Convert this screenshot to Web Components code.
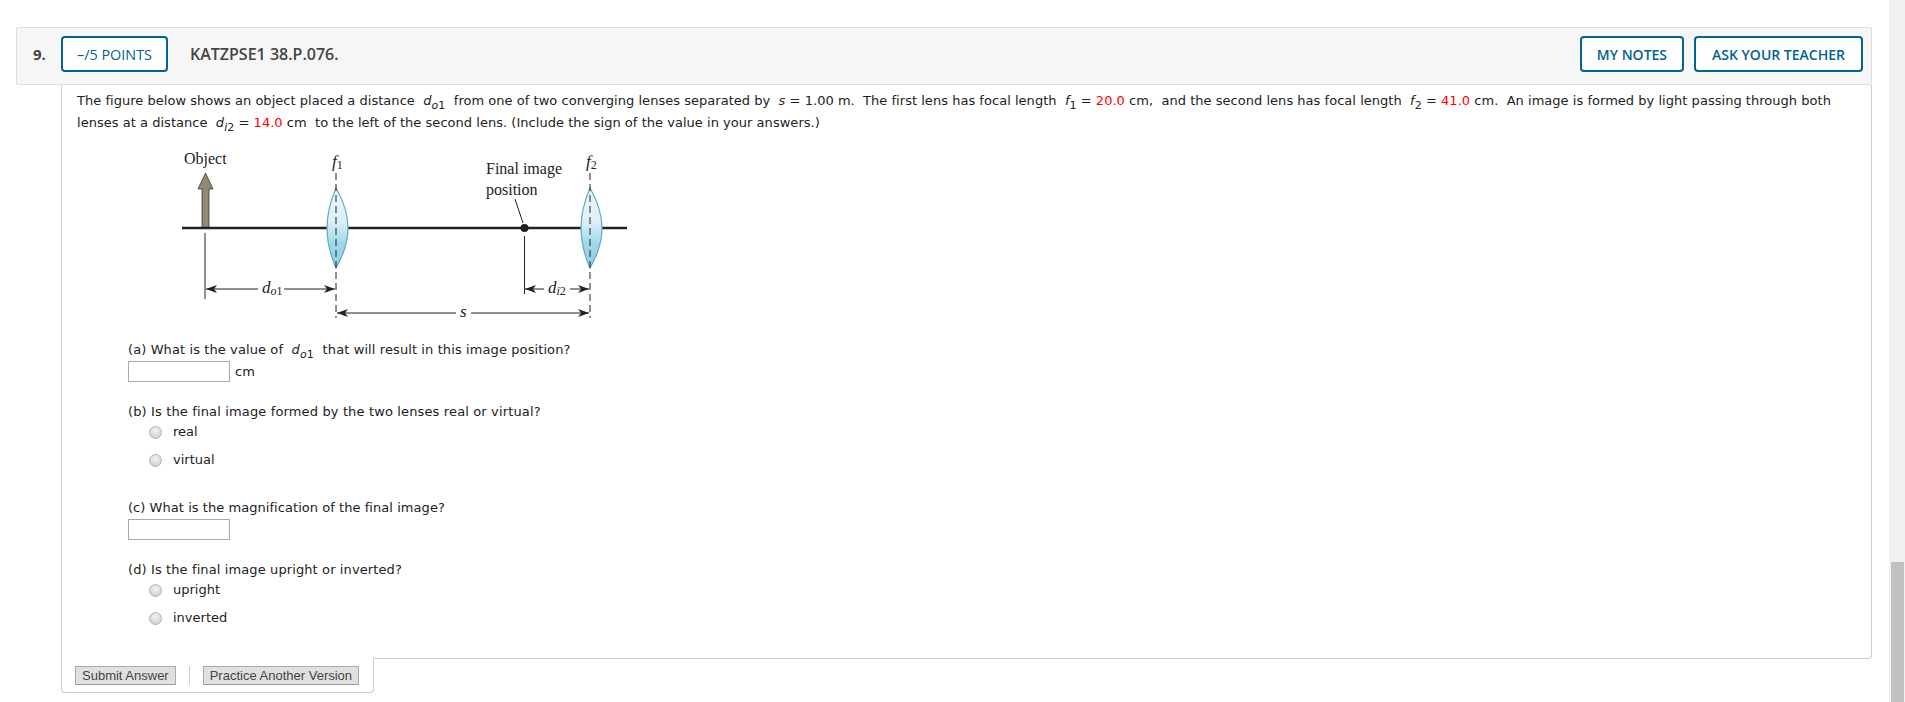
<!DOCTYPE html>
<html>
<head>
<meta charset="utf-8">
<title>Question 9</title>
<style>
  html, body { margin: 0; padding: 0; height: 100%; overflow: hidden; background: #fff; }
  body { display: flex; }
</style>
</head>
<body>
<web-assign-page>
  <question-card>
    <question-header slot="header" number="9." points="–/5 POINTS" code="KATZPSE1 38.P.076."></question-header>

    <problem-text>The figure below shows an object placed a distance&nbsp; <math-var name="d" sub="o1"></math-var>&nbsp; from one of two converging lenses separated by&nbsp; <math-var name="s"></math-var> = 1.00 m.&nbsp; The first lens has focal length&nbsp; <math-var name="f" sub="1"></math-var> = <red-value>20.0</red-value> cm,&nbsp; and the second lens has focal length&nbsp; <math-var name="f" sub="2"></math-var> = <red-value>41.0</red-value> cm.&nbsp; An image is formed by light passing through both lenses at a distance&nbsp; <math-var name="d" sub="i2"></math-var> = <red-value>14.0</red-value> cm&nbsp; to the left of the second lens. (Include the sign of the value in your answers.)</problem-text>

    <lens-figure></lens-figure>

    <question-part style="--part-top: 0px; --track: 0.1px">
      <span slot="prompt">(a) What is the value of&nbsp; <math-var name="d" sub="o1"></math-var>&nbsp; that will result in this image position?</span>
      <answer-box unit="cm"></answer-box>
    </question-part>

    <question-part style="--part-top: 20px; --track: 0.14px">
      <span slot="prompt">(b) Is the final image formed by the two lenses real or virtual?</span>
      <radio-option>real</radio-option>
      <radio-option>virtual</radio-option>
    </question-part>

    <question-part style="--part-top: 29px; --track: 0.05px">
      <span slot="prompt">(c) What is the magnification of the final image?</span>
      <answer-box></answer-box>
    </question-part>

    <question-part style="--part-top: 20px; --track: 0.11px">
      <span slot="prompt">(d) Is the final image upright or inverted?</span>
      <radio-option>upright</radio-option>
      <radio-option>inverted</radio-option>
    </question-part>

    <form-actions slot="footer"></form-actions>
  </question-card>
</web-assign-page>
<page-scrollbar></page-scrollbar>

<script>
const SANS = `"DejaVu Sans", Verdana, sans-serif`;
const HEADING = `"Open Sans", "Liberation Sans", sans-serif`;

const pageTemplate = `
<style>
  :host { display: block; flex: 1; min-width: 0; padding: 27px 17px 0 16px; }
</style>
<slot></slot>
`;

const cardTemplate = `
<style>
  :host { display: block; }
  .body {
    margin-left: 45px;
    height: 574px;
    box-sizing: border-box;
    border: 1px solid #ccc;
    border-top: 0;
    border-bottom-right-radius: 4px;
    padding-left: 15px;
  }
  .footer { margin-left: 45px; }
</style>
<slot name="header"></slot>
<div class="body"><slot></slot></div>
<div class="footer"><slot name="footer"></slot></div>
`;

const headerTemplate = `
<style>
  :host {
    display: flex;
    align-items: center;
    box-sizing: border-box;
    height: 58px;
    padding: 0 8px 4px 16px;
    background: #f6f6f6;
    border: 1px solid #ddd;
    border-radius: 2px;
    font-family: ${HEADING};
    color: #444;
  }
  .num { width: 28px; font-size: 15px; font-weight: 700; }
  .code { margin-left: 22px; font-size: 16px; font-weight: 600; flex: 1; }
  .right { display: flex; gap: 10px; }
  .ask { --pad: 16px; }
  .notes { --pad: 15px; }
</style>
<span class="num"></span>
<outline-button class="points" quiet></outline-button>
<span class="code"></span>
<div class="right">
  <outline-button class="notes">MY NOTES</outline-button>
  <outline-button class="ask">ASK YOUR TEACHER</outline-button>
</div>
`;

const buttonTemplate = `
<style>
  :host {
    display: inline-flex;
    align-items: center;
    box-sizing: border-box;
    height: 36px;
    padding: 0 var(--pad, 14px);
    border: 2px solid #006394;
    border-radius: 4px;
    background: #fff;
    color: #006394;
    font-family: ${HEADING};
    font-size: 14px;
    font-weight: 600;
    white-space: nowrap;
  }
  :host([quiet]) { font-weight: 400; font-size: 14.4px; }
</style>
<slot></slot>
`;

const textTemplate = `
<style>
  :host {
    display: block;
    font-family: ${SANS};
    font-size: 13px;
    letter-spacing: 0.03px;
    line-height: 22px;
    color: #222;
    padding: 5px 30px 0 0;
  }
</style>
<slot></slot>
`;

const mathTemplate = `
<style>
  :host { display: inline; font-family: ${SANS}; white-space: nowrap; }
  :host([sub="o1"]) { margin-right: -4px; }
  i { font-style: italic; }
  sub { font-size: 0.85em; line-height: 0; vertical-align: -4px; }
  sub i { font-style: italic; }
</style>
<i class="name"></i><sub></sub>
`;

const redTemplate = `
<style>:host { display: inline; color: #f00; }</style>
<slot></slot>
`;

// the figure is a free canvas, everything in it is placed by coordinates
const figureTemplate = `
<style>
  :host { display: block; height: 206px; }
  svg { display: block; }
  text { font-family: "Liberation Serif", serif; fill: #222; }
  .v { font-style: italic; }
</style>
<svg width="560" height="206" viewBox="0 0 560 206">
  <defs>
    <linearGradient id="glass" x1="0" y1="0" x2="0" y2="1">
      <stop offset="0" stop-color="#e9f5fb"/>
      <stop offset="0.4" stop-color="#dff0f8"/>
      <stop offset="0.7" stop-color="#9fd7ea"/>
      <stop offset="1" stop-color="#8fd0e6"/>
    </linearGradient>
    <path id="lens" d="M0 -40 C8 -26 12 -12 12 0 C12 12 8 26 0 40 C-6 26 -9 12 -9 0 C-9 -12 -6 -26 0 -40 Z"
      fill="url(#glass)" stroke="#5fa9c1" stroke-width="1.2"/>
    <path id="tipR" d="M0 0 L-11 -4 L-8 0 L-11 4 Z" fill="#222"/>
    <path id="tipL" d="M0 0 L11 -4 L8 0 L11 4 Z" fill="#222"/>
  </defs>

  <g transform="translate(-77 -133)">
    <text x="184" y="163" font-size="16">Object</text>
    <path d="M205.5 172 L213 188 L209 188 L209 227 L202 227 L202 188 L198 188 Z" fill="#8f8a70" stroke="#3d3a2e" stroke-width="0.8"/>

    <line x1="182" y1="227" x2="627" y2="227" stroke="#222" stroke-width="2.4"/>

    <text x="332" y="166" font-size="17" class="v">f<tspan font-size="12" dy="2" font-style="normal">1</tspan></text>
    <use href="#lens" x="336" y="227"/>
    <line x1="336" y1="172" x2="336" y2="317" stroke="#222" stroke-width="1" stroke-dasharray="7 4"/>

    <text x="586" y="166" font-size="17" class="v">f<tspan font-size="12" dy="2" font-style="normal">2</tspan></text>
    <use href="#lens" x="590" y="227"/>
    <line x1="590" y1="172" x2="590" y2="317" stroke="#222" stroke-width="1" stroke-dasharray="7 4"/>

    <text x="486" y="173" font-size="16">Final image</text>
    <text x="486" y="194" font-size="16">position</text>
    <line x1="515" y1="198" x2="523" y2="222" stroke="#222" stroke-width="1"/>
    <circle cx="524.5" cy="227" r="4" fill="#222"/>

    <line x1="205" y1="232" x2="205" y2="298" stroke="#222" stroke-width="1"/>
    <line x1="524.5" y1="235" x2="524.5" y2="293" stroke="#222" stroke-width="1"/>

    <line x1="206" y1="288" x2="258" y2="288" stroke="#222" stroke-width="1"/>
    <use href="#tipL" x="206" y="288"/>
    <text x="262" y="292" font-size="17" class="v">d<tspan font-size="12" dy="2">o</tspan><tspan font-size="12" font-style="normal">1</tspan></text>
    <line x1="284" y1="288" x2="335" y2="288" stroke="#222" stroke-width="1"/>
    <use href="#tipR" x="335" y="288"/>

    <line x1="525" y1="288" x2="544" y2="288" stroke="#222" stroke-width="1"/>
    <use href="#tipL" x="525" y="288"/>
    <text x="548" y="292" font-size="17" class="v">d<tspan font-size="12" dy="2">i</tspan><tspan font-size="12" font-style="normal">2</tspan></text>
    <line x1="570" y1="288" x2="589" y2="288" stroke="#222" stroke-width="1"/>
    <use href="#tipR" x="589" y="288"/>

    <line x1="337" y1="312" x2="456" y2="312" stroke="#222" stroke-width="1"/>
    <use href="#tipL" x="337" y="312"/>
    <text x="460" y="316" font-size="17" class="v">s</text>
    <line x1="471" y1="312" x2="589" y2="312" stroke="#222" stroke-width="1"/>
    <use href="#tipR" x="589" y="312"/>
  </g>
</svg>
`;

const partTemplate = `
<style>
  :host {
    display: block;
    margin: var(--part-top, 0) 0 0 51px;
    font-family: ${SANS};
    font-size: 13px;
    line-height: 20px;
    color: #222;
  }
  .prompt { display: block; height: 20px; white-space: nowrap; letter-spacing: var(--track, 0); }
</style>
<span class="prompt"><slot name="prompt"></slot></span>
<slot></slot>
`;

const answerTemplate = `
<style>
  :host { display: flex; align-items: center; height: 21px; margin-top: 1px; }
  .box {
    box-sizing: border-box;
    width: 102px;
    height: 21px;
    border: 1px solid #aaa;
    background: #fff;
  }
  .unit { margin-left: 5px; }
</style>
<div class="box"></div><span class="unit"></span>
`;

const radioTemplate = `
<style>
  :host { display: flex; align-items: center; height: 18px; margin: 1px 0 10px; padding-left: 21px; }
  .dot {
    box-sizing: border-box;
    width: 13px;
    height: 13px;
    border-radius: 50%;
    border: 1px solid #b4b4b4;
    background: radial-gradient(circle at 50% 35%, #f2f2f2 0%, #dcdcdc 55%, #c4c4c4 100%);
  }
  .label { margin-left: 11px; }
</style>
<span class="dot"></span><span class="label"><slot></slot></span>
`;

const actionsTemplate = `
<style>
  :host {
    display: flex;
    align-items: flex-start;
    box-sizing: border-box;
    width: 313px;
    height: 35px;
    margin-top: -1px;
    padding: 8px 0 0 13px;
    background: #fff;
    border: 1px solid #ccc;
    border-top: 0;
    border-radius: 0 0 4px 4px;
    position: relative;
  }
  button {
    box-sizing: border-box;
    height: 19px;
    padding: 0 6px;
    border: 1px solid #aaa;
    border-bottom-color: #999;
    border-radius: 0;
    background: #e0e0e0;
    color: #444;
    font-family: "Liberation Sans", Arial, sans-serif;
    font-size: 13px;
    line-height: 17px;
    white-space: nowrap;
  }
  .sep { width: 1px; height: 19px; background: #ccc; margin: 0 13px; }
</style>
<button>Submit Answer</button><span class="sep"></span><button>Practice Another Version</button>
`;

const scrollbarTemplate = `
<style>
  :host {
    display: flex;
    flex-direction: column;
    justify-content: flex-end;
    flex: none;
    box-sizing: border-box;
    width: 16px;
    height: 100%;
    padding: 0 1px 0 2px;
    background: #f1f1f1;
  }
  .thumb { height: 140px; background: #c1c1c1; }
</style>
<div class="thumb"></div>
`;

function shell(el, html) {
  const template = document.createElement("template");
  template.innerHTML = html;
  const root = el.attachShadow({ mode: "open" });
  root.appendChild(template.content.cloneNode(true));
  return root;
}

class WebAssignPage extends HTMLElement {
  constructor() { super(); shell(this, pageTemplate); }
}

class QuestionCard extends HTMLElement {
  constructor() { super(); shell(this, cardTemplate); }
}

class QuestionHeader extends HTMLElement {
  constructor() {
    super();
    this._shadowRoot = shell(this, headerTemplate);
  }
  connectedCallback() {
    this._shadowRoot.querySelector(".num").textContent = this.getAttribute("number");
    this._shadowRoot.querySelector(".points").textContent = this.getAttribute("points");
    this._shadowRoot.querySelector(".code").textContent = this.getAttribute("code");
  }
}

class OutlineButton extends HTMLElement {
  constructor() { super(); shell(this, buttonTemplate); }
}

class ProblemText extends HTMLElement {
  constructor() { super(); shell(this, textTemplate); }
}

class MathVar extends HTMLElement {
  constructor() {
    super();
    this._shadowRoot = shell(this, mathTemplate);
  }
  connectedCallback() {
    const sub = this.getAttribute("sub") || "";
    this._shadowRoot.querySelector(".name").textContent = this.getAttribute("name");
    const subEl = this._shadowRoot.querySelector("sub");
    // the letter part of a subscript is italic, the digit is upright
    const m = sub.match(/^([a-z]*)(.*)$/);
    subEl.innerHTML = (m[1] ? `<i>${m[1]}</i>` : "") + m[2];
  }
}

class RedValue extends HTMLElement {
  constructor() { super(); shell(this, redTemplate); }
}

class LensFigure extends HTMLElement {
  constructor() { super(); shell(this, figureTemplate); }
}

class QuestionPart extends HTMLElement {
  constructor() { super(); shell(this, partTemplate); }
}

class AnswerBox extends HTMLElement {
  constructor() {
    super();
    this._shadowRoot = shell(this, answerTemplate);
  }
  connectedCallback() {
    this._shadowRoot.querySelector(".unit").textContent = this.getAttribute("unit") || "";
  }
}

class RadioOption extends HTMLElement {
  constructor() { super(); shell(this, radioTemplate); }
}

class FormActions extends HTMLElement {
  constructor() { super(); shell(this, actionsTemplate); }
}

class PageScrollbar extends HTMLElement {
  constructor() { super(); shell(this, scrollbarTemplate); }
}

customElements.define("web-assign-page", WebAssignPage);
customElements.define("question-card", QuestionCard);
customElements.define("question-header", QuestionHeader);
customElements.define("outline-button", OutlineButton);
customElements.define("problem-text", ProblemText);
customElements.define("math-var", MathVar);
customElements.define("red-value", RedValue);
customElements.define("lens-figure", LensFigure);
customElements.define("question-part", QuestionPart);
customElements.define("answer-box", AnswerBox);
customElements.define("radio-option", RadioOption);
customElements.define("form-actions", FormActions);
customElements.define("page-scrollbar", PageScrollbar);
</script>
</body>
</html>
